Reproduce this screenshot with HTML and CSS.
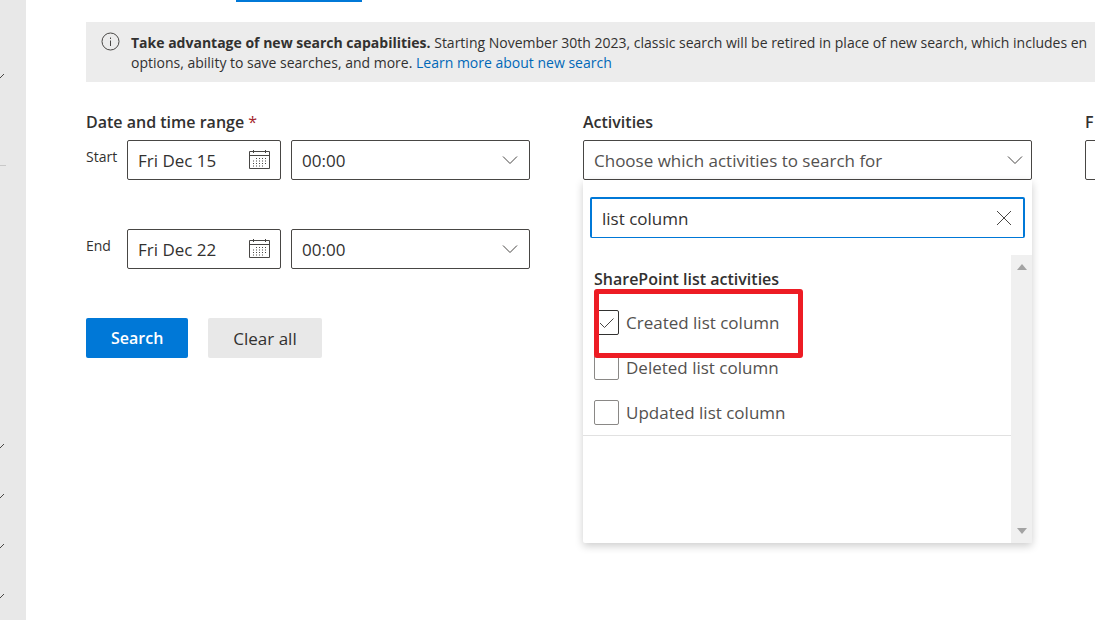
FILE: index.html
```html
<!DOCTYPE html>
<html lang="en">
<head>
    <meta charset="UTF-8">
    <meta name="viewport" content="width=device-width, initial-scale=1.0">
    <title>Search</title>
    <link rel="stylesheet" href="styles.css">
</head>
<body>
    <div class="layout">
        <nav class="sidebar">
            <div class="nav-item"><svg width="4" height="10" viewBox="0 0 4 10"><path d="M-4 3 L-1 8 L4 3"/></svg></div>
            <hr class="nav-divider">
            <div class="nav-group">
                <div class="nav-item"><svg width="4" height="10" viewBox="0 0 4 10"><path d="M-4 3 L-1 8 L4 3"/></svg></div>
                <div class="nav-item"><svg width="4" height="10" viewBox="0 0 4 10"><path d="M-4 3 L-1 8 L4 3"/></svg></div>
                <div class="nav-item"><svg width="4" height="10" viewBox="0 0 4 10"><path d="M-4 3 L-1 8 L4 3"/></svg></div>
                <div class="nav-item"><svg width="4" height="10" viewBox="0 0 4 10"><path d="M-4 3 L-1 8 L4 3"/></svg></div>
            </div>
        </nav>

        <main class="content">
            <div class="tab-line"></div>

            <div class="banner">
                <svg class="info-icon" width="20" height="20" viewBox="0 0 20 20">
                    <circle cx="9.5" cy="8.5" r="8.5"/>
                    <path d="M9.5 7.5V13M9.5 4.5V6"/>
                </svg>
                <p><strong>Take advantage of new search capabilities.</strong> Starting November 30th 2023, classic search will be retired in place of new search, which includes en<br>options, ability to save searches, and more. <a href="#">Learn more about new search</a></p>
            </div>

            <form class="filters">
                <div class="column">
                    <h2 class="field-title">Date and time range <span class="required">*</span></h2>
                    <div class="rows">
                        <div class="date-row">
                            <label for="startDate">Start</label>
                            <div class="field date-field">
                                <input type="text" id="startDate" value="Fri Dec 15">
                                <svg class="calendar" width="21" height="20" viewBox="0 0 21 20">
                                    <path d="M.5 1.5H20.5V18.5H.5ZM.5 5.5H20.5M4.5 0V3M16.5 0V3"/>
                                    <path class="dots" d="M7 8.5H17M4 11H17M4 13.5H17M4 16H14"/>
                                </svg>
                            </div>
                            <div class="field time-field">
                                <select id="startTime" aria-label="Start">
                                    <option>00:00</option>
                                </select>
                                <svg class="chevron" width="16" height="10" viewBox="0 0 16 10"><path d="M1 1.5L8 8.5L15 1.5"/></svg>
                            </div>
                        </div>
                        <div class="date-row">
                            <label for="endDate">End</label>
                            <div class="field date-field">
                                <input type="text" id="endDate" value="Fri Dec 22">
                                <svg class="calendar" width="21" height="20" viewBox="0 0 21 20">
                                    <path d="M.5 1.5H20.5V18.5H.5ZM.5 5.5H20.5M4.5 0V3M16.5 0V3"/>
                                    <path class="dots" d="M7 8.5H17M4 11H17M4 13.5H17M4 16H14"/>
                                </svg>
                            </div>
                            <div class="field time-field">
                                <select id="endTime" aria-label="End">
                                    <option>00:00</option>
                                </select>
                                <svg class="chevron" width="16" height="10" viewBox="0 0 16 10"><path d="M1 1.5L8 8.5L15 1.5"/></svg>
                            </div>
                        </div>
                        <div class="actions">
                            <button type="button" class="btn btn-primary">Search</button>
                            <button type="button" class="btn">Clear all</button>
                        </div>
                    </div>
                </div>

                <div class="column">
                    <label class="field-title" for="activities">Activities</label>
                    <div class="dropdown">
                        <div class="field">
                            <select id="activities" class="placeholder">
                                <option>Choose which activities to search for</option>
                            </select>
                            <svg class="chevron" width="16" height="10" viewBox="0 0 16 10"><path d="M1 1.5L8 8.5L15 1.5"/></svg>
                        </div>
                        <div class="dropdown-panel">
                            <div class="field search-field">
                                <input type="text" id="activitySearch" aria-label="Activities" value="list column">
                                <button type="button" class="clear-btn">
                                    <svg width="16" height="16" viewBox="0 0 16 16"><path d="M1 1L15 15M15 1L1 15"/></svg>
                                </button>
                            </div>
                            <div class="results">
                                <div class="options">
                                    <h3 class="options-title">SharePoint list activities</h3>
                                    <div class="option">
                                        <input type="checkbox" id="created" checked>
                                        <label for="created">Created list column</label>
                                        <svg class="tick" width="16" height="12" viewBox="0 0 16 12"><path d="M1 6L5.5 10.5L14.5 1.5"/></svg>
                                        <span class="highlight"></span>
                                    </div>
                                    <div class="option">
                                        <input type="checkbox" id="deleted">
                                        <label for="deleted">Deleted list column</label>
                                    </div>
                                    <div class="option">
                                        <input type="checkbox" id="updated">
                                        <label for="updated">Updated list column</label>
                                    </div>
                                </div>
                                <div class="scrollbar">
                                    <svg width="10" height="6" viewBox="0 0 10 6"><path d="M0 6L5 0L10 6Z"/></svg>
                                    <svg width="10" height="6" viewBox="0 0 10 6"><path d="M0 0L5 6L10 0Z"/></svg>
                                </div>
                            </div>
                        </div>
                    </div>
                </div>

                <div class="column column-clipped">
                    <label class="field-title" for="fileField">F</label>
                    <div class="field">
                        <input type="text" id="fileField">
                    </div>
                </div>
            </form>
        </main>
    </div>
</body>
</html>
```
FILE: styles.css
```css
:root {
    --primary-color: #0078d7;
    --link-color: #0068b8;
    --text-color: #323130;
    --border-color: #484644;
    --grey-color: #e8e8e8;
}

* {
    box-sizing: border-box;
    margin: 0;
    padding: 0;
}

body {
    background-color: #fff;
    color: var(--text-color);
    font-family: 'Segoe UI', 'Open Sans', 'Noto Sans', sans-serif;
    font-size: 14px;
    line-height: 20px;
}

input, select, button {
    font-family: inherit;
    font-size: 17px;
    color: inherit;
}

svg {
    display: block;
    fill: none;
    stroke: var(--border-color);
}

.layout {
    display: flex;
    min-height: 100vh;
}

.sidebar {
    flex: none;
    width: 26px;
    padding-top: 51px;
    background-color: var(--grey-color);
}

.nav-item {
    display: flex;
    align-items: center;
    height: 50px;
}

.nav-item:last-child {
    height: 49px;
}

.nav-divider {
    width: 6px;
    margin-top: 64px;
    border: none;
    border-top: 1px solid #c8c8c8;
}

.nav-group {
    padding-top: 255px;
}

.content {
    flex: 1;
    min-width: 0;
    padding-left: 60px;
}

.tab-line {
    width: 126px;
    height: 2px;
    margin-left: 150px;
    background-color: var(--primary-color);
}

.banner {
    display: flex;
    gap: 10px;
    margin-top: 20px;
    padding: 11px 0 9px 15px;
    background-color: #ececec;
    white-space: nowrap;
    overflow: hidden;
}

.info-icon {
    flex: none;
    overflow: visible;
}

.banner a {
    color: var(--link-color);
    text-decoration: none;
}

.filters {
    display: grid;
    grid-template-columns: 444px 449px minmax(0, 1fr);
    padding-top: 28px;
    column-gap: 53px;
}

/* the last column is cut off by narrow windows */
.column-clipped {
    overflow: hidden;
}

.column-clipped .field {
    min-width: 240px;
}

.field-title {
    display: block;
    margin-bottom: 6px;
    font-size: 16px;
    font-weight: 600;
    line-height: 24px;
}

.required {
    color: #a4262c;
    font-weight: 400;
}

.rows {
    display: flex;
    flex-direction: column;
    gap: 49px;
}

.date-row {
    display: flex;
}

.date-row label {
    width: 41px;
    padding-top: 7px;
}

.field {
    display: flex;
    align-items: center;
    position: relative;
    height: 40px;
    border: 1px solid var(--border-color);
    border-radius: 2px;
    background-color: #fff;
}

.field input, .field select {
    width: 100%;
    height: 100%;
    padding: 0 10px;
    border: none;
    outline: none;
    background: none;
    appearance: none;
}

.field .placeholder {
    color: #53514f;
}

.date-field {
    width: 154px;
    margin-right: 10px;
}

.time-field {
    flex: 1;
}

.chevron {
    position: absolute;
    right: 8px;
    pointer-events: none;
}

.time-field .chevron {
    right: 11px;
}

.calendar {
    position: absolute;
    right: 10px;
}

.calendar .dots {
    stroke-width: 1;
    stroke-dasharray: 1 2;
}

.actions {
    display: flex;
    gap: 20px;
}

.btn {
    height: 40px;
    padding: 0 25px;
    border: none;
    border-radius: 2px;
    background-color: var(--grey-color);
}

.btn-primary {
    background-color: var(--primary-color);
    color: #fff;
    font-size: 16px;
    font-weight: 600;
}

.dropdown {
    position: relative;
}

.dropdown-panel {
    position: absolute;
    top: 100%;
    left: 0;
    right: 0;
    padding-top: 17px;
    background-color: #fff;
    border-radius: 0 0 2px 2px;
    box-shadow: 0 3px 8px rgba(0, 0, 0, 0.2);
}

.search-field {
    height: 41px;
    margin: 0 7px;
    border: 2px solid var(--primary-color);
    border-bottom-width: 1px;
}

.clear-btn {
    padding: 0 11px;
    border: none;
    background: none;
}

.results {
    display: flex;
    height: 288px;
    margin-top: 17px;
}

.options {
    flex: 1;
    align-self: flex-start;
    padding: 12px 11px 0;
    border-bottom: 1px solid #e1e1e1;
}

.options-title {
    margin-bottom: 9px;
    font-size: 16px;
    font-weight: 600;
    line-height: 24px;
}

.option {
    display: flex;
    align-items: center;
    gap: 7px;
    position: relative;
    height: 45px;
    color: #53514f;
    font-size: 17px;
}

.option input {
    width: 25px;
    height: 25px;
    border: 1px solid #8a8886;
    border-radius: 2px;
    appearance: none;
}

.option input:checked {
    border-color: var(--text-color);
}

.tick {
    position: absolute;
    left: 5px;
}

/* red frame over the first option */
.highlight {
    position: absolute;
    z-index: 1;
    top: -11px;
    left: 0;
    width: 209px;
    height: 69px;
    border: 5px solid #ed1c24;
    border-radius: 3px;
    pointer-events: none;
}

.scrollbar {
    display: flex;
    flex-direction: column;
    justify-content: space-between;
    align-items: center;
    width: 21px;
    padding: 9px 0;
    background-color: #f0f0f0;
}

.scrollbar svg {
    fill: #a3a3a3;
    stroke: none;
}
```
